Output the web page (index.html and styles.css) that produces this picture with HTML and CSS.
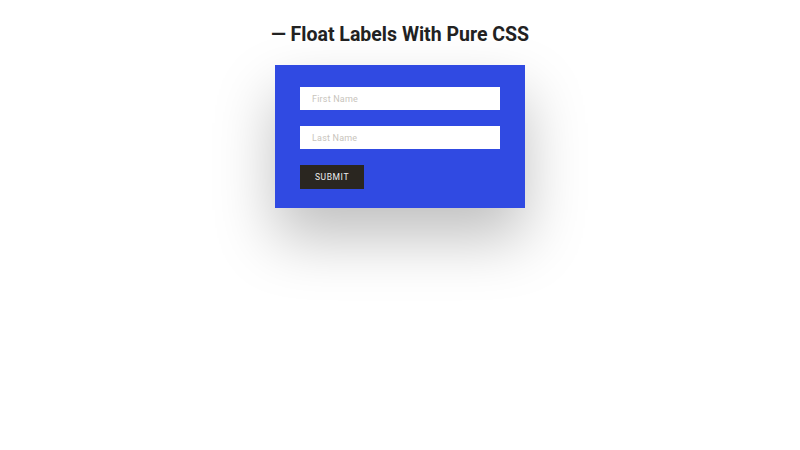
FILE: index.html
```html
<!DOCTYPE html>
<html lang="en">
<head>
  <meta charset="UTF-8">
  <meta name="viewport" content="width=device-width, initial-scale=1.0">
  <title>Float Labels With Pure CSS</title>
  <link rel="stylesheet" href="styles.css">
</head>
<body>
  <h1>&mdash; Float Labels With Pure CSS</h1>
  <form class="card">
    <input class="field" type="text" placeholder="First Name">
    <input class="field" type="text" placeholder="Last Name">
    <button class="submit" type="button">Submit</button>
  </form>
</body>
</html>
```

FILE: styles.css
```css
html {
  background: #fff;
}
body {
  font-family: Roboto, "Liberation Sans", sans-serif;
  margin: 0;
  padding: 22px 0;
  min-height: 100vh;
  box-sizing: border-box;
  color: #222;
  display: flex;
  flex-direction: column;
  align-items: center;
}
h1 {
  font-size: 19.5px;
  font-weight: 700;
  margin: 0 0 17px;
  line-height: 26px;
  color: #222;
}
.card {
  width: 200px;
  padding: 22px 25px 19px;
  background: #304ae2;
  display: flex;
  flex-direction: column;
  align-items: flex-start;
  gap: 16px;
  box-shadow: 0 30px 60px rgba(0, 0, 0, 0.25);
}
.field {
  box-sizing: border-box;
  width: 200px;
  height: 23px;
  border: none;
  padding: 0 12px;
  font-family: inherit;
  font-size: 9px;
  letter-spacing: 0.2px;
  background: #fff;
  outline: none;
}
.field::placeholder {
  color: #c8c4bc;
}
.submit {
  width: 64px;
  height: 24px;
  border: none;
  background: #2a2620;
  color: #eee;
  font-family: inherit;
  font-size: 8.5px;
  letter-spacing: 0.6px;
  text-transform: uppercase;
  cursor: pointer;
}
```
